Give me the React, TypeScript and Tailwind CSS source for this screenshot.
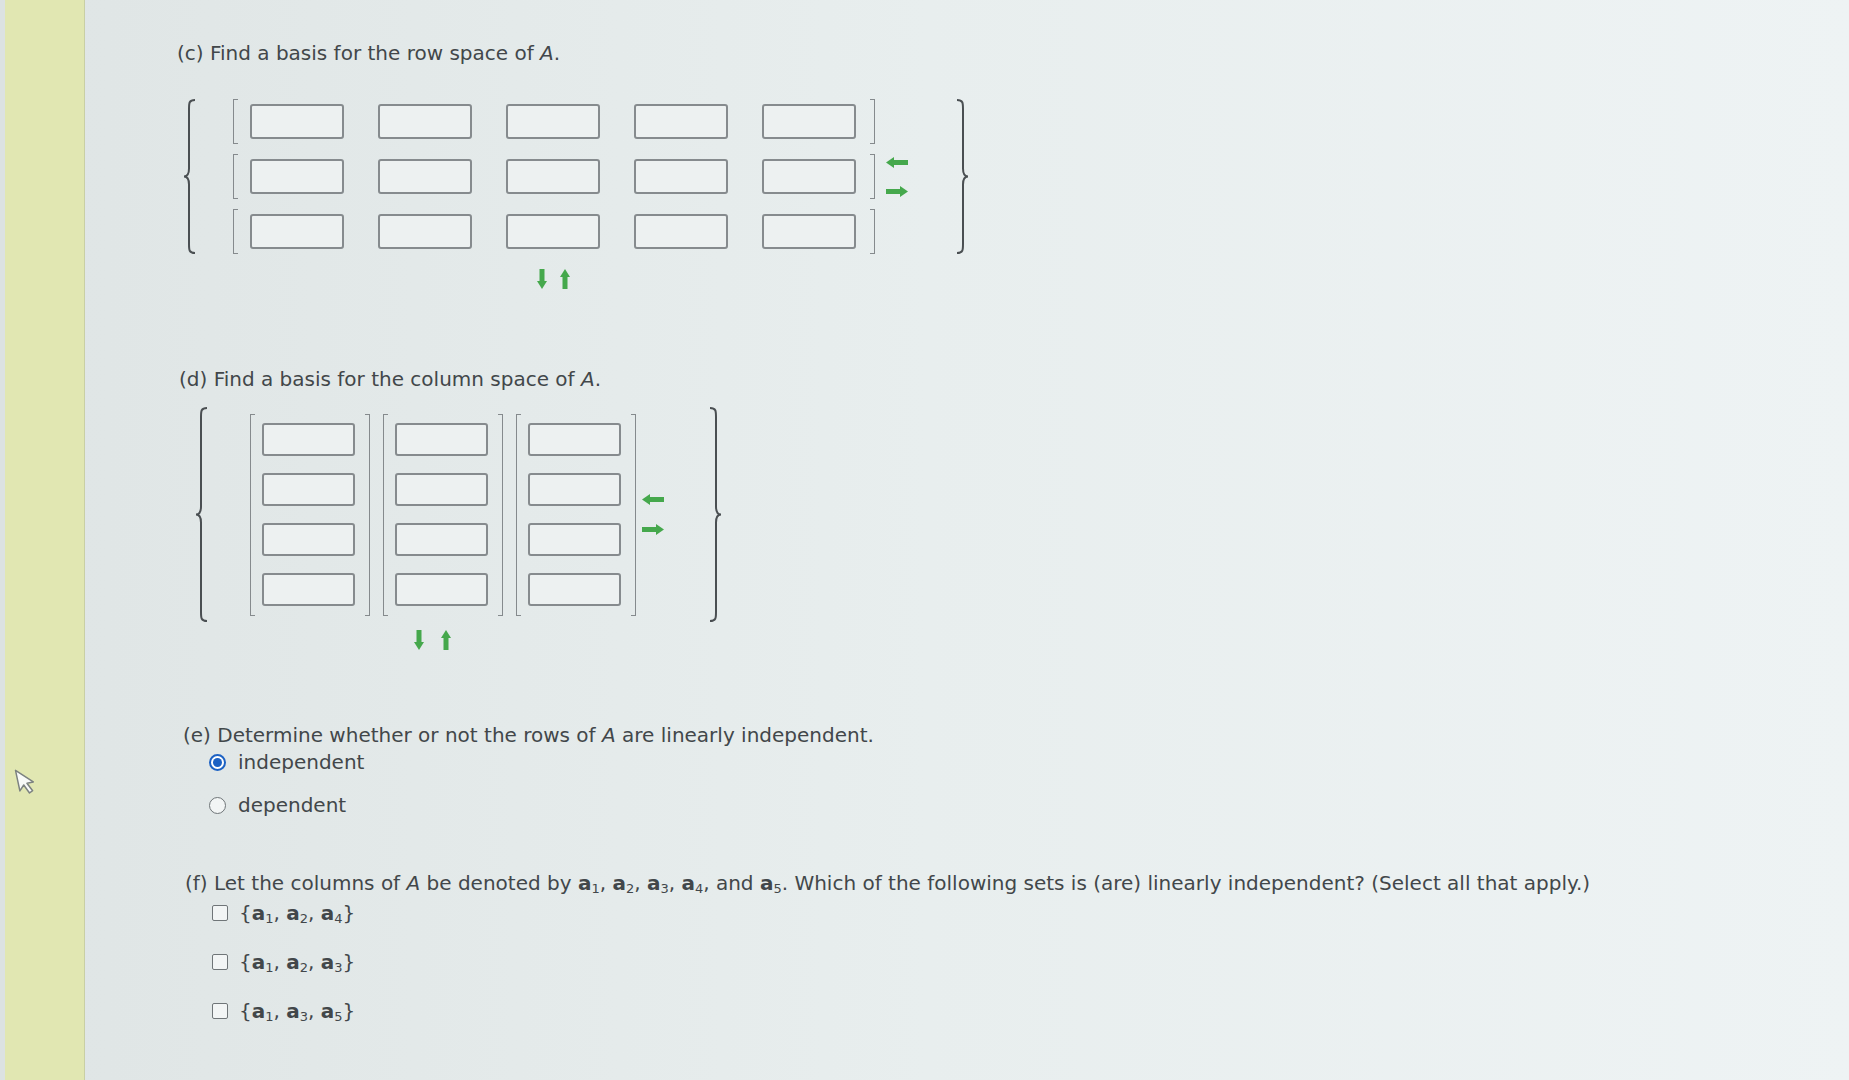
import React from 'react'

const textFont = "font-['DejaVu_Sans','Open_Sans',sans-serif]"

// curly brace drawn to a given height
function Brace({ h, right = false }: { h: number; right?: boolean }) {
  const m = h / 2
  const d = `M 12 1 C 6 1, 6 4, 6 10 L 6 ${m - 8} C 6 ${m - 2}, 4 ${m}, 1 ${m} C 4 ${m}, 6 ${m + 2}, 6 ${m + 8} L 6 ${h - 10} C 6 ${h - 4}, 6 ${h - 1}, 12 ${h - 1}`
  return (
    <svg width="14" height={h} viewBox={`0 0 14 ${h}`} className={right ? '-scale-x-100' : ''}>
      <path d={d} fill="none" stroke="#4a4f52" strokeWidth="2" />
    </svg>
  )
}

function LBracket() {
  return <div className="w-[5px] self-stretch border-y-[1.5px] border-l-[1.5px] border-[#858a8d]" />
}

function RBracket() {
  return <div className="w-[5px] self-stretch border-y-[1.5px] border-r-[1.5px] border-[#858a8d]" />
}

function RowBox() {
  return <div className="w-[94px] h-[35px] rounded-[3px] border-2 border-[#868b8e] bg-[#edf1f1]" />
}

function ColBox() {
  return <div className="w-[93px] h-[33px] rounded-[3px] border-2 border-[#868b8e] bg-[#edf1f1]" />
}

function ArrowLeft() {
  return (
    <svg width="22" height="11" viewBox="0 0 22 11">
      <polygon points="0,5.5 8,0 8,3 22,3 22,8 8,8 8,11" fill="#45a84c" />
    </svg>
  )
}

function ArrowRight() {
  return (
    <svg width="22" height="11" viewBox="0 0 22 11">
      <polygon points="22,5.5 14,0 14,3 0,3 0,8 14,8 14,11" fill="#45a84c" />
    </svg>
  )
}

function ArrowDown() {
  return (
    <svg width="10" height="20" viewBox="0 0 10 20">
      <polygon points="2.5,0 7.5,0 7.5,12 10,12 5,20 0,12 2.5,12" fill="#45a84c" />
    </svg>
  )
}

function ArrowUp() {
  return (
    <svg width="10" height="20" viewBox="0 0 10 20">
      <polygon points="2.5,20 7.5,20 7.5,8 10,8 5,0 0,8 2.5,8" fill="#45a84c" />
    </svg>
  )
}

function Vec({ n }: { n: number }) {
  return (
    <span>
      <b className="font-bold">a</b>
      <sub className="text-[13px]">{n}</sub>
    </span>
  )
}

function SetLabel({ a, b, c }: { a: number; b: number; c: number }) {
  return (
    <span>
      {'{'}
      <Vec n={a} />, <Vec n={b} />, <Vec n={c} />
      {'}'}
    </span>
  )
}

export default function App() {
  return (
    <div className={`relative flex h-[1080px] w-full overflow-hidden bg-linear-to-r from-[#dfe5e5] via-[#e8eeee] to-[#eef3f4] text-[20px] text-[#42474a] ${textFont}`}>
      {/* left strip */}
      <div className="flex w-[85px] shrink-0 bg-[#dce2e2] pl-[5px]">
        <div className="flex-1 border-r border-[#c9cfa4] bg-[#e1e7b2]" />
      </div>

      {/* mouse cursor */}
      <svg width="24" height="30" viewBox="0 0 24 30" className="absolute left-[16px] top-[766px] -rotate-12">
        <path d="M2 2 L2 23 L7 18 L11 27 L14.5 25.5 L10.5 17 L17 17 Z" fill="#f8faf8" stroke="#7c8280" strokeWidth="1.5" strokeLinejoin="round" />
      </svg>

      <div className="flex flex-col pl-[92px] pt-[41px]">
        {/* (c) */}
        <div className="leading-[24px]">
          (c) Find a basis for the row space of <i>A</i>.
        </div>
        <div className="mt-[34px] ml-[6px] flex items-center">
          <Brace h={155} />
          <div className="ml-[36px] flex flex-col gap-[10px]">
            {[0, 1, 2].map((r) => (
              <div key={r} className="flex h-[45px] items-stretch">
                <LBracket />
                <div className="flex items-center gap-[34px] pl-[12px] pr-[14px]">
                  <RowBox />
                  <RowBox />
                  <RowBox />
                  <RowBox />
                  <RowBox />
                </div>
                <RBracket />
              </div>
            ))}
          </div>
          <div className="ml-[11px] flex flex-col gap-[18px]">
            <ArrowLeft />
            <ArrowRight />
          </div>
          <div className="ml-[47px]">
            <Brace h={155} right />
          </div>
        </div>
        <div className="mt-[15px] ml-[360px] flex gap-[13px]">
          <ArrowDown />
          <ArrowUp />
        </div>

        {/* (d) */}
        <div className="mt-[78px] ml-[2px] leading-[24px]">
          (d) Find a basis for the column space of <i>A</i>.
        </div>
        <div className="mt-[16px] ml-[18px] flex items-center">
          <Brace h={215} />
          <div className="ml-[41px] flex gap-[13px]">
            {[0, 1, 2].map((c) => (
              <div key={c} className="flex h-[202px] items-stretch">
                <LBracket />
                <div className="flex flex-col justify-center gap-[17px] pl-[7px] pr-[10px]">
                  <ColBox />
                  <ColBox />
                  <ColBox />
                  <ColBox />
                </div>
                <RBracket />
              </div>
            ))}
          </div>
          <div className="ml-[6px] flex flex-col gap-[19px]">
            <ArrowLeft />
            <ArrowRight />
          </div>
          <div className="ml-[44px]">
            <Brace h={215} right />
          </div>
        </div>
        <div className="mt-[8px] ml-[237px] flex gap-[17px]">
          <ArrowDown />
          <ArrowUp />
        </div>

        {/* (e) */}
        <div className="mt-[73px] ml-[6px] leading-[24px]">
          (e) Determine whether or not the rows of <i>A</i> are linearly independent.
        </div>
        <div className="mt-[3px] ml-[32px] flex flex-col gap-[19px]">
          <label className="flex h-[24px] items-center gap-[12px]">
            <span className="flex h-[17px] w-[17px] items-center justify-center rounded-full border-2 border-[#1d62c4] bg-white">
              <span className="h-[9px] w-[9px] rounded-full bg-[#1d62c4]" />
            </span>
            <span>independent</span>
          </label>
          <label className="flex h-[24px] items-center gap-[12px]">
            <span className="h-[17px] w-[17px] rounded-full border-[1.5px] border-[#6f7578] bg-[#f2f5f5]" />
            <span>dependent</span>
          </label>
        </div>

        {/* (f) */}
        <div className="mt-[54px] ml-[8px] leading-[24px] whitespace-nowrap">
          (f) Let the columns of <i>A</i> be denoted by <Vec n={1} />, <Vec n={2} />, <Vec n={3} />, <Vec n={4} />, and{' '}
          <Vec n={5} />. Which of the following sets is (are) linearly independent? (Select all that apply.)
        </div>
        <div className="mt-[6px] ml-[35px] flex flex-col gap-[25px]">
          {[
            [1, 2, 4],
            [1, 2, 3],
            [1, 3, 5],
          ].map(([a, b, c]) => (
            <label key={`${a}${b}${c}`} className="flex h-[24px] items-center gap-[11px]">
              <span className="h-[16px] w-[16px] rounded-[2px] border-[1.5px] border-[#6f7578] bg-[#f2f5f5]" />
              <SetLabel a={a} b={b} c={c} />
            </label>
          ))}
        </div>
      </div>
    </div>
  )
}
